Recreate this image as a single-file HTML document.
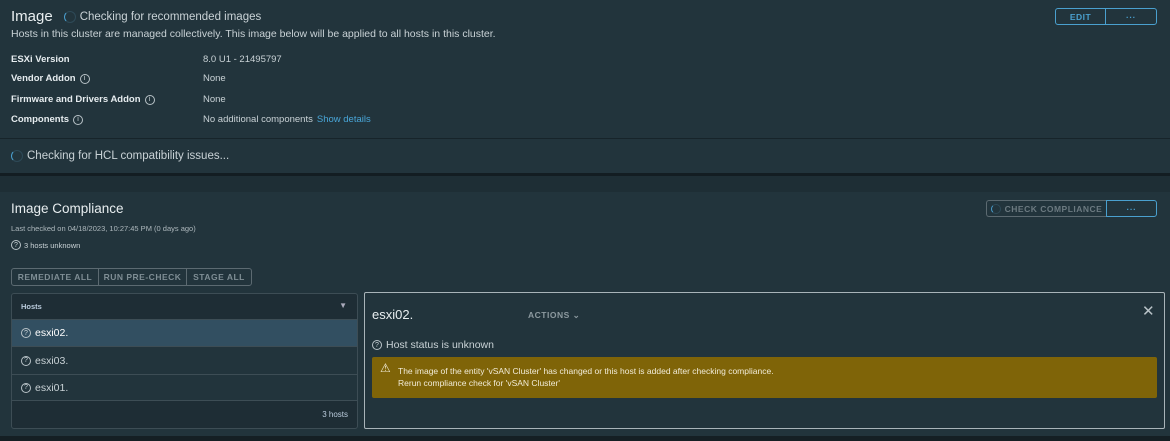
<!DOCTYPE html>
<html><head><style>
*{box-sizing:border-box;margin:0;padding:0}
body{width:1170px;height:441px;background:#22343c;font-family:"Liberation Sans",sans-serif;color:#c9d2d6;position:relative;overflow:hidden;font-size:11px}
.a{position:absolute;white-space:nowrap;display:flex;align-items:center;gap:4px}
.spin{display:inline-block;width:12px;height:12px;border-radius:50%;border:1.5px solid #2e4a58;border-left-color:#4a9fcf;flex:none}
.q{display:inline-flex;align-items:center;justify-content:center;width:10px;height:10px;border:1px solid #b8c2c7;border-radius:50%;font-size:7px;color:#c9d2d6;flex:none;font-weight:normal}
.b{font-weight:bold;color:#e6ecef;font-size:9.5px}
.btn{position:absolute;border:1px solid #4aa0cf;border-radius:3px;display:flex;font-size:8.5px;font-weight:bold;letter-spacing:.5px;color:#4aa0cf}
.btn div{display:flex;align-items:center;justify-content:center;height:100%}
.ht{font-size:10.5px}
</style></head><body>
<div class="a" style="left:11px;top:8px;font-size:15px;color:#e8eef0">Image<span style="width:3px"></span><span class="spin"></span><span style="font-size:11.5px;color:#c9d2d6">Checking for recommended images</span></div>
<div class="a" style="left:11px;top:28px;font-size:10.5px">Hosts in this cluster are managed collectively. This image below will be applied to all hosts in this cluster.</div>
<div class="a b" style="left:11px;top:54px">ESXi Version</div><div class="a" style="left:203px;top:54px;font-size:9.5px">8.0 U1 - 21495797</div>
<div class="a b" style="left:11px;top:73px">Vendor Addon <span class="q">i</span></div><div class="a" style="left:203px;top:73px;font-size:9.5px">None</div>
<div class="a b" style="left:11px;top:94px">Firmware and Drivers Addon <span class="q">i</span></div><div class="a" style="left:203px;top:94px;font-size:9.5px">None</div>
<div class="a b" style="left:11px;top:114px">Components <span class="q">i</span></div><div class="a" style="left:203px;top:114px;font-size:9.5px">No additional components <span style="color:#49a6d8">Show details</span></div>
<div class="btn" style="left:1055px;top:8px;width:102px;height:17px"><div style="width:50px;border-right:1px solid #4aa0cf">EDIT</div><div style="flex:1">···</div></div>
<div class="a" style="left:0;top:138px;width:1170px;height:1px;background:#17242a"></div>
<div class="a" style="left:11px;top:150px;font-size:11.5px"><span class="spin"></span>Checking for HCL compatibility issues...</div>
<div class="a" style="left:0;top:173px;width:1170px;height:3px;background:#131d22"></div>
<div class="a" style="left:0;top:176px;width:1170px;height:16px;background:#1e2e35"></div>
<div class="a" style="left:11px;top:201px;font-size:13.5px;color:#e8eef0">Image Compliance</div>
<div class="a" style="left:11px;top:224px;font-size:7.5px;color:#aeb8bd">Last checked on 04/18/2023, 10:27:45 PM (0 days ago)</div>
<div class="a" style="left:11px;top:240px;font-size:7.5px;color:#c9d2d6;gap:3px"><span class="q">?</span>3 hosts unknown</div>
<div class="btn" style="left:986px;top:200px;width:120px;height:17px;border-color:#5c6a71;border-radius:3px 0 0 3px;border-right:none;color:#6c7a81;align-items:center;justify-content:center;gap:4px"><span class="spin" style="width:10px;height:10px"></span>CHECK COMPLIANCE</div>
<div class="btn" style="left:1106px;top:200px;width:51px;height:17px;border-radius:0 3px 3px 0;justify-content:center;align-items:center">···</div>
<div class="btn" style="left:11px;top:268px;width:241px;height:18px;border-color:#5c6a71;color:#7f8e95"><div style="width:87px;border-right:1px solid #5c6a71">REMEDIATE ALL</div><div style="width:88px;border-right:1px solid #5c6a71">RUN PRE-CHECK</div><div style="flex:1">STAGE ALL</div></div>
<div class="a" style="left:11px;top:293px;width:347px;height:136px;border:1px solid #3d4d55;border-radius:3px;background:#1e2d35;overflow:hidden;display:block">
<div style="height:25px;padding:8px 9px;font-size:7.5px;font-weight:bold;color:#bcd;position:relative">Hosts<span style="position:absolute;right:10px;top:7px;font-size:8px;color:#aab">▼</span></div>
<div class="ht" style="height:27px;background:#324f61;border-top:1px solid #3d4d55;padding:0 9px;color:#fff;display:flex;align-items:center;gap:4px"><span class="q">?</span>esxi02.</div>
<div class="ht" style="height:28px;background:#22343c;border-top:1px solid #3d4d55;padding:0 9px;display:flex;align-items:center;gap:4px"><span class="q">?</span>esxi03.</div>
<div class="ht" style="height:27px;background:#22343c;border-top:1px solid #3d4d55;border-bottom:1px solid #3d4d55;padding:0 9px;display:flex;align-items:center;gap:4px"><span class="q">?</span>esxi01.</div>
<div style="text-align:right;padding:9px 9px;font-size:8px;color:#bcd">3 hosts</div>
</div>
<div class="a" style="left:364px;top:292px;width:801px;height:137px;border:1px solid #a9b4b9;border-radius:2px"></div>
<div class="a" style="left:372px;top:307px;font-size:13px;color:#e8eef0">esxi02.</div>
<div class="a" style="left:528px;top:310px;font-size:8.5px;font-weight:bold;letter-spacing:.5px;color:#8d9aa0">ACTIONS ⌄</div>
<div class="a" style="left:1142px;top:302px;font-size:15px;color:#b8c2c7">✕</div>
<div class="a" style="left:372px;top:339px;font-size:10.5px"><span class="q">?</span>Host status is unknown</div>
<div class="a" style="left:372px;top:357px;width:785px;height:41px;background:#7f6408;border-radius:2px;color:#f2ecd8;font-size:8.5px;padding:0 0 0 26px;line-height:12px;display:block;padding-top:8px">The image of the entity 'vSAN Cluster' has changed or this host is added after checking compliance.<br>Rerun compliance check for 'vSAN Cluster'<span style="position:absolute;left:8px;top:5px;font-size:12px">⚠</span></div>
<div class="a" style="left:0;top:436px;width:1170px;height:5px;background:#151f24"></div>
</body></html>
